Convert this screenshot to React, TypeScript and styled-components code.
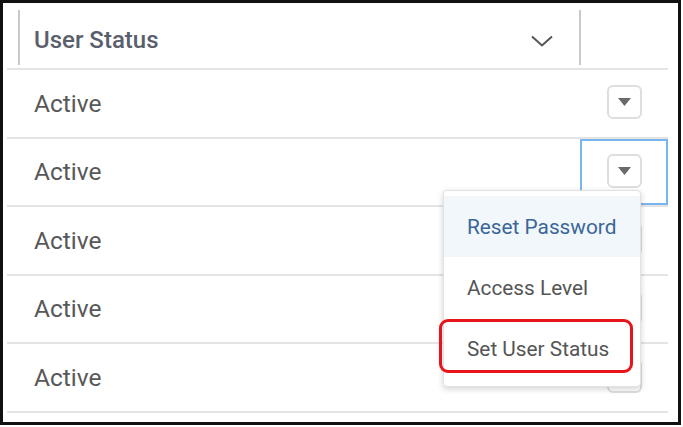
import * as React from 'react'
import styled, {createGlobalStyle} from 'styled-components'

const GlobalStyle = createGlobalStyle`
  html, body {
    margin: 0;
    padding: 0;
    background: #fff;
  }
  body {
    font-family: Roboto, 'Liberation Sans', sans-serif;
  }
`

const Frame = styled.div`
  position: relative;
  box-sizing: border-box;
  width: 681px;
  height: 425px;
  border: 3px solid #111;
  background: #fff;
  overflow: hidden;
  padding: 0 10px 0 4px;
`

const HeaderRow = styled.div`
  display: flex;
  align-items: stretch;
  height: 67px;
  box-sizing: border-box;
  border-bottom: 2px solid #e4e4e4;
  padding-left: 11px;
`

const Divider = styled.div`
  width: 2px;
  background: #c9c9c9;
  margin: 7px 0 3px;
`

const HeaderTitle = styled.div`
  flex: 1;
  display: flex;
  align-items: center;
  justify-content: space-between;
  padding: 8px 25px 0 14px;
  font-size: 24px;
  font-weight: 500;
  color: #59606c;
`

const HeaderAction = styled.div`
  width: 87px;
`

const Chevron = styled.svg`
  width: 24px;
  height: 12px;
  margin-top: 2px;
`

const Row = styled.div`
  display: flex;
  height: 68.5px;
  box-sizing: border-box;
  border-bottom: 2px solid #e4e4e4;
`

const StatusCell = styled.div`
  flex: 1;
  display: flex;
  align-items: center;
  padding-left: 27px;
  font-size: 24.5px;
  color: #585858;
`

const ActionCell = styled.div<{$focused?: boolean}>`
  width: 88px;
  box-sizing: border-box;
  display: flex;
  align-items: center;
  justify-content: center;
  border: 2px solid ${p => (p.$focused ? '#7ab6ee' : 'transparent')};
  padding-bottom: 2px;
`

const CaretButton = styled.div`
  width: 35px;
  height: 34px;
  box-sizing: border-box;
  border: 2px solid #dedede;
  border-radius: 6px;
  background: #fff;
  display: flex;
  align-items: center;
  justify-content: center;
`

const Caret = styled.svg`
  width: 13px;
  height: 8px;
`

const Menu = styled.div`
  position: absolute;
  left: 440px;
  top: 187px;
  width: 198px;
  box-sizing: border-box;
  padding: 5px 0 7px;
  background: #fff;
  border: 1px solid #e2e2e2;
  border-radius: 4px;
  box-shadow: 0 2px 6px rgba(0, 0, 0, 0.18);
`

const MenuItem = styled.div<{$active?: boolean}>`
  position: relative;
  height: 61px;
  display: flex;
  align-items: center;
  padding-left: 23px;
  font-size: 20.8px;
  color: ${p => (p.$active ? '#3b6697' : '#555')};
  background: ${p => (p.$active ? '#f2f7fc' : 'transparent')};
`

const Callout = styled.span`
  position: absolute;
  left: -5px;
  right: 7px;
  top: 1px;
  bottom: 6px;
  border: 3px solid #e8141c;
  border-radius: 9px;
`

const rows = ['Active', 'Active', 'Active', 'Active', 'Active']

export default function App() {
  return (
    <>
      <GlobalStyle />
      <Frame>
        <HeaderRow>
          <Divider />
          <HeaderTitle>
            User Status
            <Chevron viewBox="0 0 24 12">
              <polyline points="2,1.5 12,10.5 22,1.5" fill="none" stroke="#555" strokeWidth="2" />
            </Chevron>
          </HeaderTitle>
          <Divider />
          <HeaderAction />
        </HeaderRow>
        {rows.map((status, i) => (
          <Row key={i}>
            <StatusCell>{status}</StatusCell>
            <ActionCell $focused={i === 1}>
              <CaretButton>
                <Caret viewBox="0 0 13 8">
                  <polygon points="0,0 13,0 6.5,8" fill="#6a6a6a" />
                </Caret>
              </CaretButton>
            </ActionCell>
          </Row>
        ))}
        <Menu>
          <MenuItem $active>Reset Password</MenuItem>
          <MenuItem>Access Level</MenuItem>
          <MenuItem>
            Set User Status
            <Callout />
          </MenuItem>
        </Menu>
      </Frame>
    </>
  )
}
